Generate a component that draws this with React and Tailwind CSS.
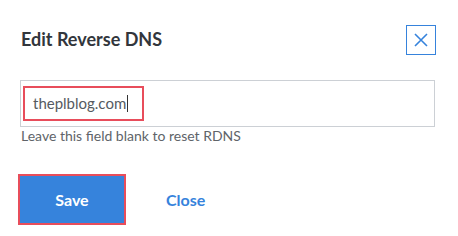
import React from "react";

export default function App() {
  return (
    <div
      className="w-[458px] h-[236px] bg-white pl-5 pr-[23px] pt-[25px]"
      style={{ fontFamily: "Lato, 'Open Sans', sans-serif" }}
    >
      {/* Header */}
      <div className="flex items-center justify-between h-[30px]">
        <h2 className="text-[18px] font-bold text-[#32363c] leading-none pl-px -mt-[3px]">
          Edit Reverse DNS
        </h2>
        <button className="w-[30px] h-[30px] border border-[#3683dc] flex items-center justify-center -mr-px">
          <svg width="16" height="16" viewBox="0 0 16 16" fill="none">
            <path d="M2 2 L14 14 M14 2 L2 14" stroke="#3683dc" strokeWidth="1.6" />
          </svg>
        </button>
      </div>

      {/* Input */}
      <div className="mt-[25px] h-[47px] border border-[#ccd0d5] pl-[2px] pt-[5px]">
        <div className="w-[121px] h-[35px] border-2 border-[#e84d5b] flex items-center pl-2">
          <span className="text-[15px] text-[#555a61]">theplblog.com</span>
          <span className="w-px h-[17px] bg-[#333] ml-px" />
        </div>
      </div>
      <p className="text-[14px] leading-4 text-[#606469] mt-[1px] pl-px">
        Leave this field blank to reset RDNS
      </p>

      {/* Actions */}
      <div className="mt-[30px] flex items-center">
        <button className="w-[108px] h-[51px] -ml-[2px] border-2 border-[#e84d5b] bg-[#3683dc] text-white text-[16px] font-bold">
          Save
        </button>
        <button className="ml-[40px] text-[16px] font-bold text-[#3683dc]">Close</button>
      </div>
    </div>
  );
}
